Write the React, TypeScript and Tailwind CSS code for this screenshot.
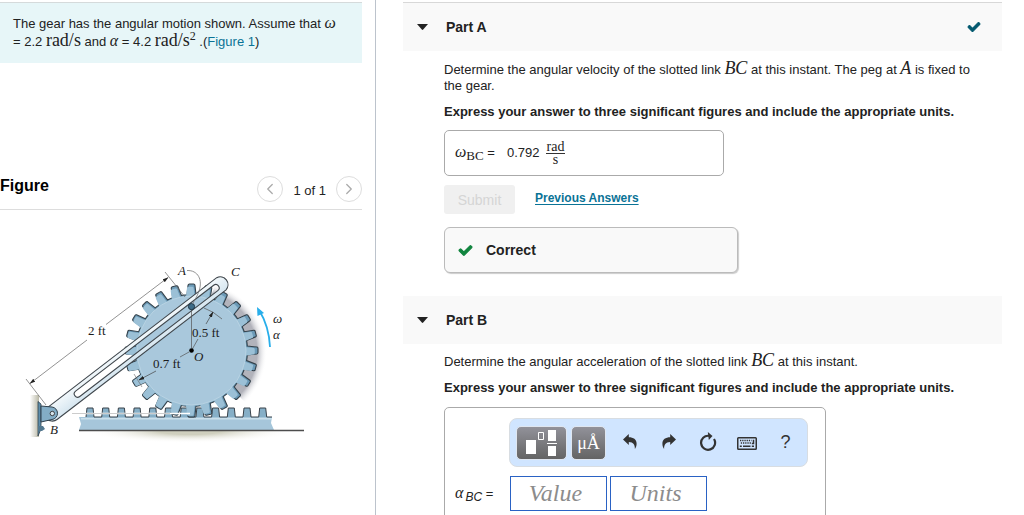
import { useState } from "react";
import type { ReactNode } from "react";
import { FaCheck } from "react-icons/fa";
import { ChevronLeft, ChevronRight } from "lucide-react";

const CX = 191.5;
const CY = 350.5;

function gearPath(root: number, tip: number, teeth: number) {
  const step = 360 / teeth;
  const pt = (r: number, deg: number) => {
    const a = (deg * Math.PI) / 180;
    return `${(CX + r * Math.cos(a)).toFixed(2)} ${(CY + r * Math.sin(a)).toFixed(2)}`;
  };
  const parts: string[] = [];
  for (let i = 0; i < teeth; i++) {
    const c = i * step;
    parts.push(`${i === 0 ? "M" : "L"}${pt(root, c - 4.6)}`);
    parts.push(`L${pt(tip - 1, c - 3)}`);
    parts.push(`Q${pt(tip, c - 2.8)} ${pt(tip, c - 1.8)}`);
    parts.push(`L${pt(tip, c + 1.8)}`);
    parts.push(`Q${pt(tip, c + 2.8)} ${pt(tip - 1, c + 3)}`);
    parts.push(`L${pt(root, c + 4.6)}`);
    parts.push(`A${root} ${root} 0 0 1 ${pt(root, c + step - 4.6)}`);
  }
  return parts.join(" ") + "Z";
}

function rackTeeth(start: number, count: number, pitch: number) {
  let d = "M86 417 ";
  for (let i = 0; i < count; i++) {
    const x = start + i * pitch;
    d += `L${x - 4} 417 L${x - 3} 408 L${x + 3} 408 L${x + 4} 417 `;
  }
  return d + "L272 417";
}

function GearFigure() {
  return (
    <svg viewBox="0 250 362 200" className="block w-full" role="img" aria-label="Gear and slotted link">
      <defs>
        <marker id="dim" viewBox="0 0 10 6" refX="9" refY="3" markerWidth="6" markerHeight="4" markerUnits="userSpaceOnUse" orient="auto">
          <path d="M0 0L10 3L0 6Z" fill="#222" />
        </marker>
        <linearGradient id="wall" x1="0" x2="1">
          <stop offset="0" stopColor="#fff" />
          <stop offset="1" stopColor="#b9b8a6" />
        </linearGradient>
        <radialGradient id="ground">
          <stop offset="0.3" stopColor="#cfcfbe" />
          <stop offset="1" stopColor="#fff" stopOpacity="0" />
        </radialGradient>
        <radialGradient id="shade">
          <stop offset="0.86" stopColor="#b2b3bb" />
          <stop offset="1" stopColor="#fff" stopOpacity="0" />
        </radialGradient>
        <linearGradient id="plate" x1="0" x2="0" y1="0" y2="1">
          <stop offset="0" stopColor="#f2f8fb" />
          <stop offset="1" stopColor="#d6e6f0" />
        </linearGradient>
        <clipPath id="shadeClip">
          <path d="M215 285L275 300V402H245L192 350Z" />
        </clipPath>
        <clipPath id="groundClip">
          <path d="M70 431H310V450H70Z" />
        </clipPath>
      </defs>

      <ellipse cx="190" cy="431" rx="105" ry="12" fill="url(#ground)" clipPath="url(#groundClip)" />
      <circle cx="196" cy="352" r="71" fill="url(#shade)" clipPath="url(#shadeClip)" />
      <rect x="30" y="395" width="9" height="42" fill="url(#wall)" />

      <path d="M79 430L81 424L79 417H272L271 423L274 430Z" fill="#a6c6da" />
      <path d={rackTeeth(90, 12, 15.7)} fill="#86afc7" stroke="#39424a" strokeWidth="1" />
      <path d="M81 418.800H272" stroke="#c9dfeb" strokeWidth="1.500" />
      <path d="M79 430.500H304" stroke="#4d4d4d" strokeWidth="1.400" />

      <path d={gearPath(56, 66.5, 24)} fill="#6b9ab7" stroke="#35424b" strokeWidth="1.100" />
      <g transform="translate(-1.200 0.800)">
        <path d={gearPath(54.5, 64.5, 24)} fill="#9bc0d6" />
      </g>
      <circle cx={CX} cy={CY} r="54.500" fill="#a9c8dc" stroke="#bcd6e5" strokeWidth="0.800" />
      <path d="M74 413.500H190" stroke="#fff" strokeWidth="1.300" />
      <path d="M72 413.500H170" stroke="#999" strokeWidth="0.500" />

      <g transform="translate(52.3 413.3) rotate(-37.5)">
        <path
          fillRule="evenodd"
          d="M0 -7.5H213A7.8 7.8 0 0 1 213 7.8H0A7.6 7.6 0 0 1 0 -7.5ZM32 -3.4A3.4 3.4 0 0 0 32 3.4H206A3.4 3.4 0 0 0 206 -3.4Z"
          fill="url(#plate)"
          stroke="#3f464c"
          strokeWidth="1.100"
        />
      </g>

      <path d="M38 401.500L41 404V429L38 436Z" fill="#5e8eab" stroke="#31414d" strokeWidth="0.800" />
      <path d="M41 406L52 407A6.300 6.300 0 0 1 52 419.500L41 422Z" fill="#83adc6" stroke="#31414d" strokeWidth="1" />
      <circle cx="52.300" cy="413.500" r="2.200" fill="#d8e6ee" stroke="#333" strokeWidth="0.900" />
      <path d="M38 426L43 426L45 429L42 431L38 431Z" fill="#52788f" />

      <path d="M191.500 309V348M191.500 350.500L198 339" stroke="#555" strokeWidth="0.700" fill="none" />
      <path d="M204 308Q213 311 222 319" stroke="#555" strokeWidth="0.700" fill="none" />
      <path d="M206 324L213 312" stroke="#444" strokeWidth="0.700" markerEnd="url(#dim)" />
      <circle cx="191.500" cy="306.600" r="3.100" fill="#3d6c88" stroke="#1e3646" strokeWidth="1" />
      <circle cx="191.500" cy="350.500" r="2.300" fill="#000" />
      <path d="M189 352L180 357" stroke="#555" strokeWidth="0.700" />
      <path d="M156 371L139 380" stroke="#444" strokeWidth="0.700" markerEnd="url(#dim)" />
      <path d="M134 374L142 387" stroke="#666" strokeWidth="0.600" />

      <path d="M87 340L30 383.500" stroke="#777" strokeWidth="0.800" markerEnd="url(#dim)" />
      <path d="M106 324.500L168 277.500" stroke="#777" strokeWidth="0.800" markerEnd="url(#dim)" />
      <path d="M26 379L46 405M165 272L185 297" stroke="#666" strokeWidth="0.700" />
      <path d="M187 270.500C198 270 203 280 199 291C197 297 194 301 192.500 304" stroke="#777" strokeWidth="0.800" fill="none" />

      <path d="M270 347Q269 326 259 310" stroke="#28aeea" strokeWidth="1.800" fill="none" />
      <path d="M257 307L264 313L257.500 316Z" fill="#28aeea" />

      <g fontFamily="'Liberation Serif', serif" fontSize="13" fill="#1c1c1c">
        <text x="88" y="335">2 ft</text>
        <text x="192" y="337">0.5 ft</text>
        <text x="153" y="368">0.7 ft</text>
        <g fontStyle="italic">
          <text x="178" y="275">A</text>
          <text x="231" y="276">C</text>
          <text x="194" y="361">O</text>
          <text x="50" y="434">B</text>
          <text x="273" y="323">ω</text>
          <text x="273" y="339">α</text>
        </g>
      </g>
    </svg>
  );
}

function Greek({ children }: { children: ReactNode }) {
  return <i className="font-['Liberation_Serif',serif] text-base leading-[0]">{children}</i>;
}

function Sym({ children }: { children: ReactNode }) {
  return <i className="font-['Liberation_Serif',serif] text-lg leading-[0]">{children}</i>;
}

function Unit({ children }: { children: ReactNode }) {
  return <span className="font-['Liberation_Serif',serif] text-lg leading-[0]">{children}</span>;
}

function PartHeader({ title, done }: { title: string; done?: boolean }) {
  return (
    <header className="flex h-12 items-center bg-[#f9f9f9] pl-3.5 pr-[22px]">
      <button type="button" aria-label={`Collapse ${title}`} className="flex w-[29px]">
        <svg viewBox="0 0 11 6" className="h-1.5 w-[11px]" aria-hidden="true">
          <path d="M0 0H11L6.200 5.600Q5.500 6.200 4.800 5.600Z" fill="#222" />
        </svg>
      </button>
      <h2 className="flex-1 text-sm font-bold text-[#222]">{title}</h2>
      {done && <FaCheck className="size-3 overflow-visible text-[#045a70]" stroke="currentColor" strokeWidth={44} aria-label="Complete" />}
    </header>
  );
}

function CurvedArrow({ flip }: { flip?: boolean }) {
  return (
    <svg viewBox="0 0 14 15" className={flip ? "h-[15px] w-3.5 -scale-x-100" : "h-[15px] w-3.5"} aria-hidden="true">
      <path d="M0 5.500L5.800 0V3.200C10.500 3.200 13.500 5.500 13.600 9.200C13.700 11.500 13 13.400 11.900 15C12 11 10.500 7.900 5.800 7.900V11Z" fill="#333" />
    </svg>
  );
}

function ResetIcon() {
  return (
    <svg viewBox="0 0 18 20" className="h-5 w-[18px]" aria-hidden="true">
      <path d="M10 3.800A7 7 0 1 0 15 7" fill="none" stroke="#333" strokeWidth="2.200" />
      <path d="M8.800 0L13.500 4L9.800 8Z" fill="#333" />
    </svg>
  );
}

function KeyboardIcon() {
  return (
    <svg viewBox="0 0 20 13" className="h-[13px] w-5" aria-hidden="true">
      <rect x="0.750" y="0.750" width="18.500" height="11.500" rx="0.800" fill="none" stroke="#333" strokeWidth="1.500" />
      <path d="M3 3.500H14.500M3.800 6H14.500" stroke="#333" strokeWidth="1.500" strokeDasharray="1.300 0.900" />
      <path d="M16.500 2.800V6.600H14.800M2.800 9.300H4.800M6 9.300H13.500M14.800 9.300H17" stroke="#333" strokeWidth="1.500" fill="none" />
    </svg>
  );
}

const tool = "flex h-8 w-[39px] items-center justify-center text-[#333]";
const darkTool =
  "flex h-[34px] items-center justify-center rounded-[5px] border border-[#dfe6f0] bg-linear-to-b from-[#92929a] to-[#646464] text-white";
const field =
  "h-[35px] w-[97px] border border-[#2a62c4] bg-white pr-1.5 text-center font-['Liberation_Serif',serif] text-2xl italic text-[#333] placeholder:text-[#8c8c8c] outline-none";

export default function App() {
  const [value, setValue] = useState("");
  const [units, setUnits] = useState("");

  return (
    <div className="flex h-screen overflow-hidden bg-white font-['Liberation_Sans',Arial,sans-serif] text-[13px] leading-4 text-[#222]">
      <aside className="w-[376px] shrink-0 border-r border-[#bcc3cc] pr-[13px] pt-0.5">
        <section className="border-t border-[#d5dadb] bg-[#e7f6f8] pb-3 pl-[13px] pt-3">
          <p className="leading-[18px]">
            The gear has the angular motion shown. Assume that <Greek>ω</Greek>
            <br />= 2.2 <Unit>rad/s</Unit> and <Greek>α</Greek> = 4.2 <Unit>rad/s</Unit>
            <sup className="font-['Liberation_Serif',serif] text-xs leading-[0]">2</sup> .(
            <a href="#figure" className="text-[#0a7396]">
              Figure 1
            </a>
            )
          </p>
        </section>

        <section id="figure" className="pt-[113px]">
          <div className="flex h-[34px] items-start border-b border-[#ddd]">
            <h2 className="flex-1 text-base font-bold leading-5 text-black">Figure</h2>
            <div className="flex items-center">
              <button type="button" aria-label="Previous figure" className="flex size-[26px] items-center justify-center rounded-full border border-[#ddd] text-[#aaa]">
                <ChevronLeft size={18} strokeWidth={1.75} />
              </button>
              <span className="px-2.5 pt-1">1 of 1</span>
              <button type="button" aria-label="Next figure" className="flex size-[26px] items-center justify-center rounded-full border border-[#ddd] text-[#aaa]">
                <ChevronRight size={18} strokeWidth={1.75} />
              </button>
            </div>
          </div>
          <div className="pt-10">
            <GearFigure />
          </div>
        </section>
      </aside>

      <main className="min-w-0 flex-1 pl-[27px] pr-[22px] pt-0.5">
        <section className="border-t border-[#d8d8d8]">
          <PartHeader title="Part A" done />
          <div className="pb-[23px] pl-[41px] pr-4 pt-[11px]">
            <p>
              Determine the angular velocity of the slotted link <Sym>BC</Sym> at this instant. The peg at <Sym>A</Sym> is fixed to{" "}
              <span className="whitespace-nowrap">the gear.</span>
            </p>
            <p className="pt-2.5 font-bold">Express your answer to three significant figures and include the appropriate units.</p>
            <div className="mt-2.5 flex h-[46px] w-[280px] items-center rounded-[5px] border border-[#aaa] pl-2.5">
              <span className="w-[52px]">
                <Greek>ω</Greek>
                <sub className="font-['Liberation_Serif',serif] text-[13px]">BC</sub> =
              </span>
              <span>0.792</span>
              <span className="ml-1.5 flex flex-col text-center font-['Liberation_Serif',serif] text-sm leading-3">
                <span className="border-b border-[#333] px-px">rad</span>
                <span>s</span>
              </span>
            </div>
            <div className="mt-[9px] flex items-center gap-5">
              <button type="button" disabled className="h-[29px] w-[71px] rounded-[3px] bg-[#f0f0f0] text-sm text-[#d5d5d5]">
                Submit
              </button>
              <a href="#previous" className="pb-1 text-xs font-bold text-[#0a7396] underline underline-offset-2">
                Previous Answers
              </a>
            </div>
            <div className="mt-[13px] flex h-[46px] w-[294px] items-center gap-3.5 rounded-md border border-[#bbb] bg-[#f9f9f9] pl-3.5 text-sm font-bold shadow-[1px_1px_1px_#ccc]">
              <FaCheck className="size-[13px] overflow-visible text-[#12853f]" stroke="currentColor" strokeWidth={44} aria-hidden="true" />
              Correct
            </div>
          </div>
        </section>

        <section>
          <PartHeader title="Part B" />
          <div className="pl-[41px] pr-4 pt-2.5">
            <p>
              Determine the angular acceleration of the slotted link <Sym>BC</Sym> at this instant.
            </p>
            <p className="pt-2.5 font-bold">Express your answer to three significant figures and include the appropriate units.</p>
            <div className="mt-[11px] w-[382px] rounded-[5px] border border-[#aaa] pb-5 pl-2.5 pr-[17px] pt-2.5">
              <div className="ml-[54px] flex h-[49px] items-center rounded-lg border border-[#d8dde2] bg-[#d0e5ff] pl-1.5">
                <button type="button" aria-label="Templates" className={`${darkTool} w-[51px]`}>
                  <svg viewBox="0 0 31 26" className="h-[26px] w-[31px]" aria-hidden="true">
                    <path d="M0 10H10V24H0ZM22 0H30V11H22ZM22 16H30V26H22Z" fill="#fff" />
                    <path d="M21 13.500H31" stroke="#fff" />
                    <path d="M12.500 2.500H17.500V9.500H12.500Z" fill="none" stroke="#fff" />
                  </svg>
                </button>
                <button type="button" aria-label="Symbols" className={`${darkTool} ml-1 w-[35px] font-['Liberation_Serif',serif] text-lg`}>
                  μÅ
                </button>
                <div className="flex items-center pb-0.5 pl-1">
                  <button type="button" aria-label="Undo" className={tool}>
                    <CurvedArrow />
                  </button>
                  <button type="button" aria-label="Redo" className={tool}>
                    <CurvedArrow flip />
                  </button>
                  <button type="button" aria-label="Reset" className={tool}>
                    <ResetIcon />
                  </button>
                  <button type="button" aria-label="Keyboard shortcuts" className={`${tool} pt-1`}>
                    <KeyboardIcon />
                  </button>
                  <button type="button" aria-label="Help" className={`${tool} text-lg`}>
                    ?
                  </button>
                </div>
              </div>
              <div className="mt-[9px] flex items-center">
                <label htmlFor="value" className="w-[55px]">
                  <Greek>α</Greek>
                  <sub className="pl-0.5 text-xs italic">BC</sub> =
                </label>
                <input id="value" className={field} placeholder="Value" value={value} onChange={(e) => setValue(e.target.value)} />
                <input aria-label="Units" className={`${field} ml-[3px]`} placeholder="Units" value={units} onChange={(e) => setUnits(e.target.value)} />
              </div>
            </div>
          </div>
        </section>
      </main>
    </div>
  );
}
